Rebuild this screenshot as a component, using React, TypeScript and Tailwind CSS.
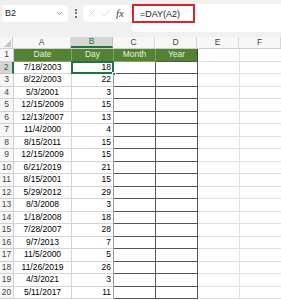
import { X, Check, ChevronDown } from "lucide-react";

const rows: [string, number][] = [
  ["7/18/2003", 18],
  ["8/22/2003", 22],
  ["5/3/2001", 3],
  ["12/15/2009", 15],
  ["12/13/2007", 13],
  ["11/4/2000", 4],
  ["8/15/2011", 15],
  ["12/15/2009", 15],
  ["6/21/2019", 21],
  ["8/15/2001", 15],
  ["5/29/2012", 29],
  ["8/3/2008", 3],
  ["1/18/2008", 18],
  ["7/28/2007", 28],
  ["9/7/2013", 7],
  ["11/5/2000", 5],
  ["11/26/2019", 26],
  ["4/3/2021", 3],
  ["5/11/2017", 11],
];

const cols = [
  { key: "A", w: "w-[58px]" },
  { key: "B", w: "w-[42px]" },
  { key: "C", w: "w-[42px]" },
  { key: "D", w: "w-[42px]" },
  { key: "E", w: "w-[42px]" },
  { key: "F", w: "w-[42px]" },
];

export default function App() {
  return (
    <div className="w-[281px] h-[300px] overflow-hidden bg-white font-['Liberation_Sans',Arial,sans-serif] text-[8.5px] text-black">
      {/* Formula bar */}
      <div className="h-[37px] bg-[#f0f0f0] flex items-start pt-[4px]">
        <div className="ml-[2px] mt-[1px] w-[66px] h-[17px] bg-white rounded-[3px] flex items-center justify-between pl-[3px] pr-[4px]">
          <span className="text-[9px] text-[#222]">B2</span>
          <ChevronDown className="w-[9px] h-[9px] text-[#666]" strokeWidth={2} />
        </div>
        <div className="w-[15px] h-[18px] flex flex-col items-center justify-center gap-[1.5px]">
          <div className="w-[2px] h-[2px] bg-[#777]" />
          <div className="w-[2px] h-[2px] bg-[#777]" />
          <div className="w-[2px] h-[2px] bg-[#777]" />
        </div>
        <div className="mt-[1px] w-[47px] h-[17px] bg-white rounded-[3px] flex items-center pl-[3px] gap-[3px]">
          <X className="w-[11px] h-[11px] text-[#c8c8c8]" strokeWidth={1.3} />
          <Check className="w-[11px] h-[11px] text-[#c8c8c8]" strokeWidth={1.3} />
          <span className="ml-[2px] font-['Liberation_Serif',serif] italic text-[11px] text-[#444] leading-none">
            fx
          </span>
        </div>
        <div className="ml-[2px] flex-1 h-[28px] bg-white relative">
          <div className="absolute left-[0px] top-[0px] w-[63px] h-[19px] border-2 border-[#e0202a]" />
          <div className="pl-[8px] pt-[4px] text-[9px] text-[#222]">=DAY(A2)</div>
        </div>
      </div>

      {/* Column headers */}
      <div className="flex h-[12px] bg-[#f7f7f7] border-b border-[#d0d0d0]">
        <div className="w-[14px] border-r border-[#d0d0d0] relative">
          <div className="absolute right-[1px] bottom-[1px] w-0 h-0 border-l-[7px] border-l-transparent border-b-[7px] border-b-[#c4c4c4]" />
        </div>
        {cols.map((c) =>
          c.key === "B" ? (
            <div
              key={c.key}
              className={`${c.w} shrink-0 bg-[#d6d6d6] border-r border-[#c0c0c0] border-b-2 border-b-[#217346] text-[#217346] flex items-center justify-center`}
            >
              {c.key}
            </div>
          ) : (
            <div
              key={c.key}
              className={`${c.w} shrink-0 border-r border-[#d8d8d8] text-[#444] flex items-center justify-center`}
            >
              {c.key}
            </div>
          )
        )}
      </div>

      {/* Row 1 */}
      <div className="flex h-[12.5px]">
        <div className="w-[14px] shrink-0 bg-[#f7f7f7] border-r border-b border-[#d0d0d0] text-[#444] flex items-center justify-center">
          1
        </div>
        <div className="w-[58px] shrink-0 bg-[#548235] border-r border-b border-[#7ea164] text-[#e6efdf] flex items-center justify-center">
          Date
        </div>
        <div className="w-[42px] shrink-0 bg-[#548235] border-r border-b border-[#7ea164] text-[#e6efdf] flex items-center justify-center">
          Day
        </div>
        <div className="w-[42px] shrink-0 bg-[#548235] border-r border-b border-[#7ea164] text-[#e6efdf] flex items-center justify-center">
          Month
        </div>
        <div className="w-[42px] shrink-0 bg-[#548235] border-r border-b border-r-[#3f3f3f] border-b-[#555] text-[#e6efdf] flex items-center justify-center">
          Year
        </div>
        <div className="w-[42px] shrink-0 border-r border-b border-[#e1e1e1]" />
        <div className="w-[42px] shrink-0 border-r border-b border-[#e1e1e1]" />
      </div>

      {/* Data rows */}
      {rows.map(([date, day], i) => {
        const n = i + 2;
        const selected = n === 2;
        return (
          <div key={n} className="flex h-[12.5px]">
            <div
              className={
                selected
                  ? "w-[14px] shrink-0 bg-[#d6d6d6] border-r-2 border-r-[#217346] border-b border-b-[#c8c8c8] text-[#217346] flex items-center justify-center"
                  : "w-[14px] shrink-0 bg-[#f7f7f7] border-r border-b border-[#d0d0d0] text-[#444] flex items-center justify-center"
              }
            >
              {n}
            </div>
            <div className="w-[58px] shrink-0 border-r border-b border-[#d4d4d4] flex items-center justify-center">
              {date}
            </div>
            <div className="w-[42px] shrink-0 border-r border-b border-r-[#9a9a9a] border-b-[#d4d4d4] flex items-center justify-end pr-[2px] relative">
              {day}
              {selected && (
                <>
                  <div className="absolute -left-[1px] -top-[1px] w-[43px] h-[13.5px] border-2 border-[#217346]" />
                  <div className="absolute -right-[3px] -bottom-[3px] w-[4px] h-[4px] bg-[#217346] border border-white" />
                </>
              )}
            </div>
            <div className="w-[42px] shrink-0 border-r border-b border-[#555]" />
            <div className="w-[42px] shrink-0 border-r border-b border-[#555]" />
            <div className="w-[42px] shrink-0 border-r border-b border-[#e1e1e1]" />
            <div className="w-[42px] shrink-0 border-r border-b border-[#e1e1e1]" />
          </div>
        );
      })}
    </div>
  );
}
